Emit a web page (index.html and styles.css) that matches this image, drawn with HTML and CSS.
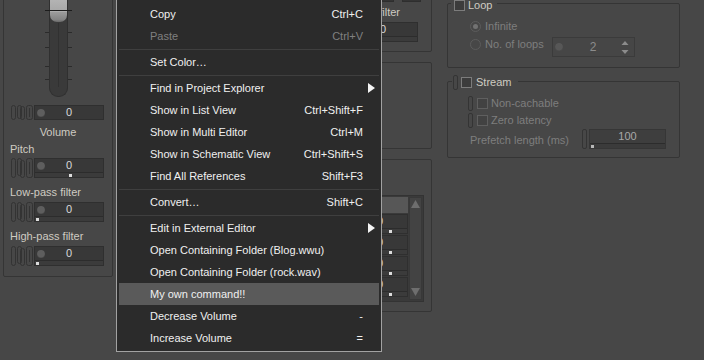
FILE: index.html
```html
<!DOCTYPE html>
<html lang="en">
<head>
<meta charset="utf-8">
<title>Property Editor</title>
<link rel="stylesheet" href="styles.css">
</head>
<body>
<div class="screen">
  <section class="group left-group">
    <div class="slider">
      <div class="track"><div class="knob"></div></div>
      <span class="tick" style="top:41px"></span>
      <span class="tick" style="top:56px"></span>
      <span class="tick" style="top:75px"></span>
      <span class="tick" style="top:88px"></span>
      <span class="knob-line"></span>
    </div>
    <div class="prow prow-vol">
      <svg class="links" width="24" height="15" viewBox="0 0 24 15"><rect x="1.5" y="0.5" width="4" height="14" rx="2"/><rect x="7.5" y="0.5" width="4" height="13" rx="2"/><rect x="10.5" y="1.5" width="4" height="13" rx="2"/><rect x="16.5" y="0.5" width="6" height="14" rx="2"/><path d="M19.5 3v9"/></svg>
      <div class="nbox nbox-flat"><div class="nmain"><span class="dial"></span><span class="nval">0</span></div></div>
    </div>
    <div class="plabel plabel-center">Volume</div>
    <div class="plabel plabel-first">Pitch</div>
    <div class="prow prow-first">
      <svg class="links" width="24" height="20" viewBox="0 0 24 20"><rect x="1.5" y="0.5" width="4" height="19" rx="2"/><rect x="7.5" y="0.5" width="4" height="17" rx="2"/><rect x="10.5" y="2.5" width="4" height="17" rx="2"/><rect x="16.5" y="0.5" width="6" height="19" rx="2"/><path d="M19.5 4v12"/></svg>
      <div class="nbox"><div class="nmain"><span class="dial"></span><span class="nval">0</span></div><div class="nstrip"><span class="thumb" style="margin-left:34px"></span></div></div>
    </div>
    <div class="plabel">Low-pass filter</div>
    <div class="prow">
      <svg class="links" width="24" height="20" viewBox="0 0 24 20"><rect x="1.5" y="0.5" width="4" height="19" rx="2"/><rect x="7.5" y="0.5" width="4" height="17" rx="2"/><rect x="10.5" y="2.5" width="4" height="17" rx="2"/><rect x="16.5" y="0.5" width="6" height="19" rx="2"/><path d="M19.5 4v12"/></svg>
      <div class="nbox"><div class="nmain"><span class="dial"></span><span class="nval">0</span></div><div class="nstrip"><span class="thumb" style="margin-left:1px"></span></div></div>
    </div>
    <div class="plabel">High-pass filter</div>
    <div class="prow">
      <svg class="links" width="24" height="20" viewBox="0 0 24 20"><rect x="1.5" y="0.5" width="4" height="19" rx="2"/><rect x="7.5" y="0.5" width="4" height="17" rx="2"/><rect x="10.5" y="2.5" width="4" height="17" rx="2"/><rect x="16.5" y="0.5" width="6" height="19" rx="2"/><path d="M19.5 4v12"/></svg>
      <div class="nbox"><div class="nmain"><span class="dial"></span><span class="nval">0</span></div><div class="nstrip"><span class="thumb" style="margin-left:1px"></span></div></div>
    </div>
  </section>

  <div class="mid">
    <section class="group mid-g1">
      <div class="stubs"><span class="stub stub-a"></span><span class="stub stub-b"></span></div>
      <div class="mid-label"><span>filter</span></div>
      <div class="nbox mid-box"><div class="nmain"><span class="dial"></span><span class="nval">0</span></div><div class="nstrip"><span class="thumb" style="margin-left:1px"></span></div></div>
    </section>
    <section class="group mid-g2"></section>
    <section class="group mid-g3">
      <div class="list">
        <div class="list-body">
          <div class="list-head"></div>
          <div class="lrow"><div class="nbox lbox"><div class="nmain"><span class="dial"></span><span class="nval">0</span></div><div class="nstrip"><span class="thumb" style="margin-left:36px"></span></div></div></div>
          <div class="lrow"><div class="nbox lbox"><div class="nmain"><span class="dial"></span><span class="nval">0</span></div><div class="nstrip"><span class="thumb" style="margin-left:36px"></span></div></div></div>
          <div class="lrow"><div class="nbox lbox"><div class="nmain"><span class="dial"></span><span class="nval">0</span></div><div class="nstrip"><span class="thumb" style="margin-left:36px"></span></div></div></div>
          <div class="lrow"><div class="nbox lbox"><div class="nmain"><span class="dial"></span><span class="nval">0</span></div><div class="nstrip"><span class="thumb" style="margin-left:36px"></span></div></div></div>
        </div>
        <div class="scroll">
          <svg width="9" height="8" viewBox="0 0 9 8"><path d="M4.5 0L9 8H0z"/></svg>
          <svg width="9" height="8" viewBox="0 0 9 8"><path d="M0 0H9L4.5 8z"/></svg>
        </div>
      </div>
    </section>
  </div>

  <div class="right">
    <section class="group loop-g">
      <div class="gtitle loop-title"><span class="check"></span><span class="gt-text">Loop</span></div>
      <div class="opt opt-1"><span class="radio on"></span><span class="dis">Infinite</span></div>
      <div class="opt opt-2"><span class="radio"></span><span class="dis opt-lbl">No. of loops</span>
        <div class="spin"><span class="dial dial-dis"></span><span class="spin-val">2</span>
          <svg class="spin-arr" width="8" height="13" viewBox="0 0 8 13"><path d="M4 0L7.5 4H0.5z M0.5 9L7.5 9L4 13z"/></svg>
        </div>
      </div>
    </section>
    <section class="group stream-g">
      <div class="gtitle stream-title"><span class="lnk"></span><span class="check"></span><span class="gt-text">Stream</span></div>
      <div class="sopt sopt-1"><span class="lnk"></span><span class="check check-dis"></span><span class="dis">Non-cachable</span></div>
      <div class="sopt sopt-2"><span class="lnk"></span><span class="check check-dis"></span><span class="dis">Zero latency</span></div>
      <div class="prefetch"><span class="dis pf-lbl">Prefetch length (ms)</span><span class="lnk lnk-tall"></span>
        <div class="nbox pf-box"><div class="nmain"><span class="nval pf-val">100</span></div><div class="nstrip"><span class="thumb thumb-dim" style="margin-left:1px"></span></div></div>
      </div>
    </section>
  </div>

  <nav class="menu">
    <div class="mi"><span class="ml">Copy</span><span class="mk">Ctrl+C</span><span class="ma"></span></div>
    <div class="mi dis-item"><span class="ml">Paste</span><span class="mk">Ctrl+V</span><span class="ma"></span></div>
    <div class="msep"></div>
    <div class="mi"><span class="ml">Set Color…</span><span class="ma"></span></div>
    <div class="msep"></div>
    <div class="mi"><span class="ml">Find in Project Explorer</span><span class="ma"><svg width="7" height="10" viewBox="0 0 7 10"><path d="M0 0L7 5L0 10z"/></svg></span></div>
    <div class="mi"><span class="ml">Show in List View</span><span class="mk">Ctrl+Shift+F</span><span class="ma"></span></div>
    <div class="mi"><span class="ml">Show in Multi Editor</span><span class="mk">Ctrl+M</span><span class="ma"></span></div>
    <div class="mi"><span class="ml">Show in Schematic View</span><span class="mk">Ctrl+Shift+S</span><span class="ma"></span></div>
    <div class="mi"><span class="ml">Find All References</span><span class="mk">Shift+F3</span><span class="ma"></span></div>
    <div class="msep"></div>
    <div class="mi"><span class="ml">Convert…</span><span class="mk">Shift+C</span><span class="ma"></span></div>
    <div class="msep"></div>
    <div class="mi"><span class="ml">Edit in External Editor</span><span class="ma"><svg width="7" height="10" viewBox="0 0 7 10"><path d="M0 0L7 5L0 10z"/></svg></span></div>
    <div class="mi"><span class="ml">Open Containing Folder (Blog.wwu)</span><span class="ma"></span></div>
    <div class="mi"><span class="ml">Open Containing Folder (rock.wav)</span><span class="ma"></span></div>
    <div class="mi hot"><span class="ml">My own command!!</span><span class="ma"></span></div>
    <div class="mi"><span class="ml">Decrease Volume</span><span class="mk">-</span><span class="ma"></span></div>
    <div class="mi"><span class="ml">Increase Volume</span><span class="mk">=</span><span class="ma"></span></div>
  </nav>
</div>
</body>
</html>
```

FILE: styles.css
```css
* { box-sizing: border-box; margin: 0; padding: 0; }
html, body { width: 704px; height: 360px; overflow: hidden; background: #474747; }
body { font-family: "Liberation Sans", Arial, sans-serif; font-size: 11px; line-height: 13px; color: #cfcbc2; }

.screen { position: relative; width: 704px; height: 360px; display: flex; align-items: flex-start; overflow: hidden; }

.group { border: 1px solid #353535; border-radius: 2px; flex: none; }

/* ---------- left group ---------- */
.left-group { width: 110px; height: 287px; margin: -10px 0 0 3px; padding: 0 6px; display: flex; flex-direction: column; }

.slider { position: relative; width: 27px; height: 106px; margin: 0 auto; flex: none; }
.track { position: relative; width: 19px; height: 106px; margin: 0 auto; background: #3a3a3a; border: 1px solid #303030; border-top: 0; border-radius: 0 0 9px 9px; }
.track::after { content: ""; position: absolute; left: 8px; top: 32px; bottom: 9px; width: 1px; background: #313131; }
.knob { width: 17px; height: 31px; border-radius: 0 0 7px 7px; background: linear-gradient(#bdbdbd 0, #a9a9a9 60%, #cfcfcf 62%, #9c9c9c 68%, #848484 92%, #6a6a6a 100%); }
.tick { position: absolute; left: 0; width: 27px; height: 1px; background: linear-gradient(90deg, #2b2b2b 0 4px, transparent 4px 23px, #2b2b2b 23px); }
.knob-line { position: absolute; left: 0; top: 19px; width: 27px; height: 1px; background: #1c1c1c; }

.prow { display: flex; height: 20px; margin-top: 3px; flex: none; }
.prow-first { margin-top: 2px; }
.prow-vol { height: 15px; margin-top: 8px; }
.links { flex: none; fill: none; stroke: #333; stroke-width: 1; }

.plabel { margin-top: 8px; white-space: nowrap; }
.plabel-center { margin-top: 6px; text-align: center; }
.plabel-first { margin-top: 4px; }

.nbox { width: 70px; flex: none; border: 1px solid #2f2f2f; background: #383838; display: flex; flex-direction: column; }
.nmain { height: 13px; display: flex; align-items: center; flex: none; }
.dial { flex: none; width: 8px; height: 8px; margin-left: 2px; border-radius: 50%; background: radial-gradient(circle at 50% 45%, #5e5e5e 0 55%, #4f4f4f 70%); }
.nval { flex: 1; text-align: center; padding-right: 10px; color: #d8d8d8; }
.nstrip { height: 5px; border-top: 1px solid #2c2c2c; background: #3b3b3b; display: flex; padding-top: 1px; flex: none; }
.thumb { width: 3px; height: 3px; background: #dcdcdc; flex: none; }
.thumb-dim { background: #b8b8b8; }

/* ---------- middle column ---------- */
.mid { flex: none; width: 312px; margin: -10px 0 0 7px; display: flex; flex-direction: column; }
.mid-g1 { height: 62px; }
.stubs { height: 11px; display: flex; align-items: flex-end; }
.stub { height: 8px; background: #343434; border: 1px solid #2e2e2e; border-top: 0; flex: none; }
.stub-a { width: 12px; margin-left: 261px; }
.stub-b { width: 19px; margin-left: 8px; }
.mid-label { margin: 4px 0 0 258px; width: 21px; display: flex; justify-content: flex-end; white-space: nowrap; }
.mid-box { margin: 3px 0 0 227px; }
.mid-g2 { height: 87px; margin-top: 10px; }
.mid-g3 { height: 153px; margin-top: 10px; padding-top: 35px; display: flex; flex-direction: column; }

.list { align-self: flex-end; margin-right: 7px; width: 220px; height: 107px; border: 1px solid #333; padding: 1px; background: #3a3a3a; display: flex; gap: 1px; }
.list-body { flex: 1; display: flex; flex-direction: column; }
.list-head { height: 16px; background: #575757; flex: none; }
.lrow { display: flex; justify-content: flex-end; margin-top: 1px; flex: none; }
.lbox { width: 56px; }
.scroll { width: 13px; flex: none; background: #434343; border: 1px solid #383838; display: flex; flex-direction: column; justify-content: space-between; align-items: center; padding: 2px 0 3px; fill: #6e6e6e; }

/* ---------- right column ---------- */
.right { flex: none; width: 233px; margin-left: 15px; display: flex; flex-direction: column; }
.loop-g { height: 65px; margin-top: 3px; }
.stream-g { height: 77px; margin-top: 13px; }

.gtitle { display: flex; align-items: center; width: max-content; background: #474747; }
.loop-title { height: 13px; margin: -5px 0 0 3px; padding: 0 5px 0 3px; }
.stream-title { height: 15px; margin: -7px 0 0 4px; padding: 0 7px 0 1px; }
.gt-text { color: #cfcbc2; white-space: nowrap; }

.check { flex: none; width: 11px; height: 11px; border: 1px solid #7c7c7c; background: #3c3c3c; margin-right: 3px; }
.check-dis { border-color: #5f5f5f; background: #424242; }
.lnk { flex: none; width: 5px; height: 15px; border: 1px solid #343434; border-radius: 2px; margin-right: 3px; }
.stream-title .check { margin-right: 4px; }

.dis { color: #7e7e7e; white-space: nowrap; }

.opt { display: flex; padding-left: 22px; }
.opt-1 { height: 16px; margin-top: 6px; align-items: center; }
.opt-2 { height: 20px; margin-top: 3px; align-items: flex-start; }
.radio { flex: none; width: 11px; height: 11px; border-radius: 50%; border: 1px solid #5c5c5c; margin-right: 4px; display: flex; align-items: center; justify-content: center; }
.opt-2 .radio { margin-top: 2px; }
.radio.on::after { content: ""; width: 5px; height: 5px; border-radius: 50%; background: #727272; }
.opt-lbl { width: 67px; margin-top: 1px; }

.spin { flex: none; width: 83px; height: 20px; border: 1px solid #3b3b3b; background: #464646; display: flex; align-items: center; }
.dial-dis { margin-left: 2px; background: radial-gradient(circle at 50% 45%, #575757 0 55%, #4c4c4c 70%); }
.spin-val { flex: 1; text-align: center; color: #8c8c8c; font-size: 12px; padding-left: 2px; }
.spin-arr { flex: none; margin-right: 5px; fill: #8c8c8c; stroke: none; }

.sopt { display: flex; align-items: center; height: 15px; padding-left: 20px; }
.sopt .lnk { margin-right: 4px; }
.sopt-1 { margin-top: 6px; }
.sopt-2 { margin-top: 2px; }

.prefetch { display: flex; align-items: flex-start; height: 20px; margin-top: 1px; padding-left: 22px; }
.pf-lbl { width: 112px; margin-top: 5px; flex: none; }
.lnk-tall { height: 20px; margin-right: 2px; }
.pf-box { width: 77px; border-color: #363636; background: #3e3e3e; }
.pf-val { padding-right: 0; color: #a9a9a9; }

/* ---------- context menu ---------- */
.menu { position: absolute; left: 116px; top: -10px; width: 266px; padding: 12px 2px 2px; background: #2b2b2b; border: 1px solid #a2a2a2; color: #f0f0f0; }
.mi { height: 22px; display: flex; align-items: center; padding-left: 31px; white-space: nowrap; }
.ml { flex: 1; }
.mk { flex: none; }
.ma { flex: none; width: 16px; height: 22px; padding-left: 5px; display: flex; align-items: center; fill: #f4f4f4; }
.dis-item { color: #808080; }
.hot { background: #5a5a5a; }
.msep { height: 1px; background: #3f3f3f; margin: 2px 0 1px; }
```
